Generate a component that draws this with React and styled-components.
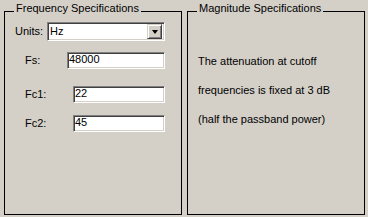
import React from "react";
import styled, { createGlobalStyle } from "styled-components";

const Global = createGlobalStyle`
  html, body { margin: 0; padding: 0; background: #d4d0c8; }
  body { font-family: "Liberation Sans", Arial, sans-serif; font-size: 11px; color: #000; }
`;

const Root = styled.div`
  display: flex;
  gap: 5px;
  height: 217px;
  box-sizing: border-box;
  padding: 0 3px 2px 4px;
  background: #d4d0c8;
`;

const Panel = styled.fieldset`
  width: 178px;
  box-sizing: border-box;
  margin: 0;
  padding: 0;
  border: 1px solid #000;
  min-width: 0;
  display: flex;
  flex-direction: column;
`;

const Legend = styled.legend`
  margin-left: 9px;
  padding: 2px 2px 8px;
  line-height: 13px;
  font-size: 11px;
`;

const Row = styled.div`
  display: flex;
  align-items: center;
  margin-top: ${(p) => p.$top}px;
  padding-left: ${(p) => p.$indent}px;
  padding-right: 16px;
`;

const Label = styled.span`
  flex: 1;
  line-height: 13px;
`;

const sunken = `
  box-sizing: border-box;
  border: 1px solid;
  border-color: #808080 #ffffff #ffffff #808080;
  box-shadow: inset 1px 1px 0 #404040, inset -1px -1px 0 #d4d0c8;
  background: #fff;
`;

const Select = styled.div`
  ${sunken}
  width: 118px;
  height: 19px;
  display: flex;
  align-items: center;
  padding: 2px 2px 2px 1px;
`;

const SelectText = styled.span`
  flex: 1;
  padding-left: 1px;
  line-height: 13px;
`;

const DropButton = styled.div`
  box-sizing: border-box;
  width: 15px;
  height: 15px;
  background: #d4d0c8;
  border: 1px solid;
  border-color: #d4d0c8 #404040 #404040 #d4d0c8;
  box-shadow: inset 1px 1px 0 #fff, inset -1px -1px 0 #808080;
  display: flex;
  align-items: center;
  justify-content: center;
`;

const Arrow = styled.span`
  width: 0;
  height: 0;
  border-left: 3.5px solid transparent;
  border-right: 3.5px solid transparent;
  border-top: 4px solid #000;
  margin-top: 1px;
`;

const Input = styled.div`
  ${sunken}
  width: ${(p) => p.$width}px;
  height: 17px;
  padding: 0 2px 0 1px;
  line-height: 13px;
`;

const Note = styled.p`
  margin: 0;
  padding-left: 10px;
  line-height: 29px;
`;

const NoteBlock = styled.div`
  margin-top: 24px;
`;

export default function App() {
  return (
    <>
      <Global />
      <Root>
        <Panel>
          <Legend>Frequency Specifications</Legend>
          <Row $top={-1} $indent={10}>
            <Label>Units:</Label>
            <Select>
              <SelectText>Hz</SelectText>
              <DropButton>
                <Arrow />
              </DropButton>
            </Select>
          </Row>
          <Row $top={11} $indent={20}>
            <Label>Fs:</Label>
            <Input $width={98}>48000</Input>
          </Row>
          <Row $top={17} $indent={20}>
            <Label>Fc1:</Label>
            <Input $width={92}>22</Input>
          </Row>
          <Row $top={12} $indent={20}>
            <Label>Fc2:</Label>
            <Input $width={92}>45</Input>
          </Row>
        </Panel>
        <Panel>
          <Legend>Magnitude Specifications</Legend>
          <NoteBlock>
            <Note>The attenuation at cutoff</Note>
            <Note>frequencies is fixed at 3 dB</Note>
            <Note>(half the passband power)</Note>
          </NoteBlock>
        </Panel>
      </Root>
    </>
  );
}
